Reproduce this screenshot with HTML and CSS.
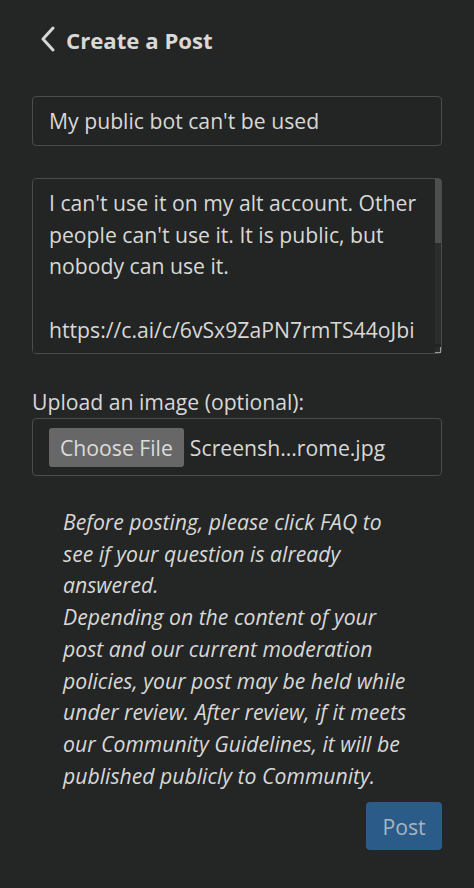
FILE: index.html
```html
<!DOCTYPE html>
<html>
<head>
<meta charset="utf-8">
<link rel="stylesheet" href="styles.css">
</head>
<body>
<div class="page">
  <header class="header">
    <svg class="back" width="16" height="26" viewBox="0 0 16 26"><path d="M13 2 L3 13 L13 24" fill="none" stroke="#d6d6d6" stroke-width="3" stroke-linecap="round" stroke-linejoin="round"/></svg>
    <h1 class="title">Create a Post</h1>
  </header>
  <input class="field title-input" type="text" value="My public bot can't be used">
  <div class="textarea-wrap">
    <textarea class="field body-input">I can't use it on my alt account. Other people can't use it. It is public, but nobody can use it.

https://c.ai/c/6vSx9ZaPN7rmTS44oJbiWqW2pLk8dFsH3vN1aZ0yTrE5 is the link to the character. Please help, I have tried everything and nothing works. Thank you for reading this post and helping me out with this issue.</textarea>
    <div class="scrollbar"><div class="thumb"></div></div>
    <div class="grip"></div>
  </div>
  <label class="upload-label">Upload an image (optional):</label>
  <div class="field file-box">
    <span class="file-btn">Choose File</span>
    <span class="file-name">Screensh...rome.jpg</span>
  </div>
  <p class="notice">Before posting, please click FAQ to see if your question is already answered.<br>Depending on the content of your post and our current moderation policies, your post may be held while under review. After review, if it meets our Community Guidelines, it will be published publicly to Community.</p>
  <div class="actions">
    <button class="post-btn">Post</button>
  </div>
</div>
</body>
</html>
```
FILE: styles.css
```css
html, body {
  margin: 0;
  padding: 0;
  background: #242525;
}
body {
  font-family: "Open Sans", "Noto Sans", sans-serif;
  color: #d8d8d6;
}
.page {
  padding: 0 32px;
  display: flex;
  flex-direction: column;
}
.header {
  display: flex;
  align-items: center;
  gap: 10px;
  height: 80px;
  padding-left: 8px;
}
.back {
  display: block;
  margin-top: -2px;
}
.title {
  margin: 0;
  font-size: 22.2px;
  font-weight: 700;
  color: #d8d8d6;
}
.field {
  box-sizing: border-box;
  width: 100%;
  background: #232424;
  border: 1px solid #4a4b4b;
  border-radius: 4px;
  font-family: inherit;
  color: #d8d8d6;
  font-size: 21.2px;
}
.title-input {
  margin-top: 16px;
  height: 50px;
  padding: 0 16px 2px;
  outline: none;
}
.textarea-wrap {
  position: relative;
  margin-top: 32px;
}
.body-input {
  height: 176px;
  padding: 8px 24px 8px 16px;
  line-height: 31.7px;
  resize: none;
  outline: none;
  display: block;
  scrollbar-width: none;
}
.scrollbar {
  position: absolute;
  top: 1px;
  right: 1px;
  width: 6px;
  height: 165px;
  background: #2b2c2c;
}
.thumb {
  height: 64px;
  background: #4d4f4f;
}
.grip {
  position: absolute;
  right: 1px;
  bottom: 1px;
  width: 6px;
  height: 6px;
  border-right: 1px solid #9a9a9a;
  border-bottom: 1px solid #9a9a9a;
  box-sizing: border-box;
  background: #2b2c2c;
}
.upload-label {
  margin-top: 33px;
  font-size: 21.2px;
  line-height: 30px;
}
.file-box {
  margin-top: 1px;
  height: 58px;
  padding: 0 16px;
  display: flex;
  align-items: center;
  gap: 6px;
}
.file-btn {
  background: #676767;
  border-radius: 3px;
  padding: 0 11px;
  height: 39px;
  line-height: 39px;
  color: #dcdcdc;
}
.file-name {
  color: #d8d8d6;
}
.notice {
  margin: 30px 0 0 0;
  padding: 0 31px;
  font-style: italic;
  font-size: 21.2px;
  line-height: 31.7px;
  color: #d8d8d6;
}
.actions {
  display: flex;
  justify-content: flex-end;
  margin-top: 11px;
}
.post-btn {
  width: 76px;
  height: 48px;
  border: none;
  border-radius: 4px;
  background: #2b5b88;
  color: #a8b4c0;
  font-family: inherit;
  font-size: 21.2px;
}
```
